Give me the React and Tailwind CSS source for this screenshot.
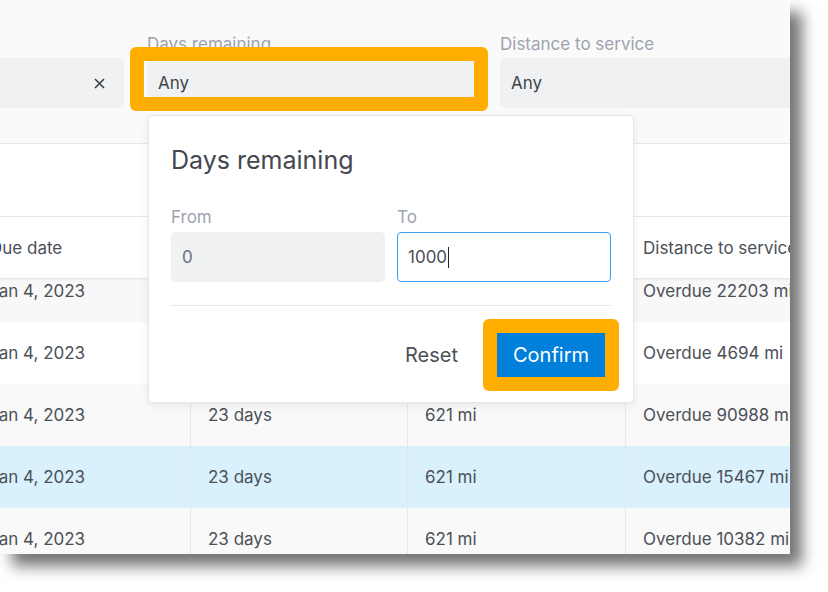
import React from 'react';

const rows = [
  { due: 'Jan 4, 2023', days: '23 days', miles: '621 mi', dist: 'Overdue 22203 mi', bg: 'bg-[#f8f8f8]' },
  { due: 'Jan 4, 2023', days: '23 days', miles: '621 mi', dist: 'Overdue 4694 mi', bg: 'bg-white' },
  { due: 'Jan 4, 2023', days: '23 days', miles: '621 mi', dist: 'Overdue 90988 mi', bg: 'bg-[#f9f9f9]' },
  { due: 'Jan 4, 2023', days: '23 days', miles: '621 mi', dist: 'Overdue 15467 mi', bg: 'bg-[#d9f0fd]' },
  { due: 'Jan 4, 2023', days: '23 days', miles: '621 mi', dist: 'Overdue 10382 mi', bg: 'bg-[#f9f9f9]' },
];

const App = () => {
  return (
    <div className="min-h-screen bg-white font-['Inter',sans-serif]">
      <div className="relative w-[790px] h-[554px] overflow-hidden bg-[#fafafa] flex flex-col shadow-[12px_12px_14px_rgba(0,0,0,0.55)]">
        {/* Filters */}
        <div className="h-[144px] shrink-0 border-b border-[#e6e8eb] pt-[34px]">
          <div className="flex gap-[23px] ml-[-206px]">
            <div className="w-[330px] shrink-0">
              <div className="h-5 leading-5 text-[17px] text-[#9ca3af]">Vehicle</div>
              <div className="mt-[4px] h-[50px] rounded-[5px] bg-[#f0f1f3] flex items-center justify-end pr-[19px]">
                <svg width="11" height="11" viewBox="0 0 11 11" className="text-[#3b4048]">
                  <path d="M1 1L10 10M10 1L1 10" stroke="currentColor" strokeWidth="1.6" />
                </svg>
              </div>
            </div>
            <div className="w-[330px] shrink-0">
              <div className="h-5 leading-5 text-[17px] text-[#9ca3af]">Days remaining</div>
              <div className="mt-[4px] h-[50px] rounded-[5px] bg-[#f0f1f3] flex items-center pl-[11px] pt-[2px] text-[17px] text-[#3f434a]">
                Any
              </div>
            </div>
            <div className="w-[330px] shrink-0">
              <div className="h-5 leading-5 text-[17px] text-[#9ca3af]">Distance to service</div>
              <div className="mt-[4px] h-[50px] rounded-[5px] bg-[#f0f1f3] flex items-center pl-[11px] pt-[2px] text-[17px] text-[#3f434a]">
                Any
              </div>
            </div>
          </div>
        </div>

        {/* Toolbar band */}
        <div className="h-[73px] shrink-0 bg-white border-b border-[#e6e8eb]" />

        {/* Table header */}
        <div className="relative z-10 h-[62px] shrink-0 bg-white border-b border-[#e3e6ea] shadow-[0_1px_2px_rgba(0,0,0,0.05)] flex items-center pt-[2px] ml-[-24px] text-[17px] text-[#4b5058] whitespace-nowrap">
          <div className="w-[214px] shrink-0 pl-[14px]">Due date</div>
          <div className="w-[217px] shrink-0 pl-[18px]">Days remaining</div>
          <div className="w-[218px] shrink-0 pl-[18px]">Mileage</div>
          <div className="w-[218px] shrink-0 pl-[18px]">Distance to service</div>
        </div>

        {/* Rows */}
        <div className="flex-1 overflow-hidden">
          <div className="mt-[-19px]">
            {rows.map((r, i) => (
              <div key={i} className={`h-[62px] flex ml-[-24px] text-[17px] text-[#4b5058] whitespace-nowrap ${r.bg}`}>
                <div className="w-[214px] shrink-0 pl-[13px] pt-[2px] flex items-center">{r.due}</div>
                <div className="w-[217px] shrink-0 pl-[17px] pt-[2px] flex items-center border-l border-[#e5e7eb]">{r.days}</div>
                <div className="w-[218px] shrink-0 pl-[17px] pt-[2px] flex items-center border-l border-[#e5e7eb]">{r.miles}</div>
                <div className="w-[218px] shrink-0 pl-[17px] pt-[2px] flex items-center border-l border-[#e5e7eb]">{r.dist}</div>
              </div>
            ))}
          </div>
        </div>

        {/* Highlight around the Days remaining filter */}
        <div className="absolute left-[130px] top-[47px] w-[358px] h-[64px] border-[14px] border-[#ffae00] rounded-[6px] z-10" />

        {/* Popover */}
        <div className="absolute left-[148px] top-[115px] w-[486px] h-[288px] z-20 bg-white border border-[#e4e7eb] rounded-[4px] shadow-[0_2px_8px_rgba(0,0,0,0.08)] px-[22px] pt-[29px]">
          <h2 className="h-[30px] leading-[30px] text-[25px] text-[#43474e]">Days remaining</h2>
          <div className="mt-[32px] grid grid-cols-2 gap-x-[12px]">
            <div>
              <div className="h-5 leading-5 text-[17px] text-[#9ca3af]">From</div>
              <div className="mt-[5px] h-[50px] rounded-[5px] bg-[#f0f1f3] flex items-center pl-[11px] pt-[2px] text-[17px] text-[#6b7079]">
                0
              </div>
            </div>
            <div>
              <div className="h-5 leading-5 text-[17px] text-[#9ca3af]">To</div>
              <div className="mt-[5px] h-[50px] rounded-[4px] bg-white border-[1.5px] border-[#3d9cf2] flex items-center pl-[10px] pt-[1px] text-[17px] text-[#4b5058]">
                1000
                <span className="w-px h-[21px] bg-[#222] ml-[1px]" />
              </div>
            </div>
          </div>
          <div className="mt-[23px] border-t border-[#e1e7ee]" />
          <div className="mt-[13px] flex items-center justify-end mr-[-8px]">
            <button className="text-[20px] text-[#4b5058] mr-[25px]">Reset</button>
            <div className="border-[14px] border-[#ffae00] rounded-[6px]">
              <button className="w-[108px] h-[44px] bg-[#0080db] text-white text-[20px] flex items-center justify-center">
                Confirm
              </button>
            </div>
          </div>
        </div>
      </div>
    </div>
  );
};

export default App;
